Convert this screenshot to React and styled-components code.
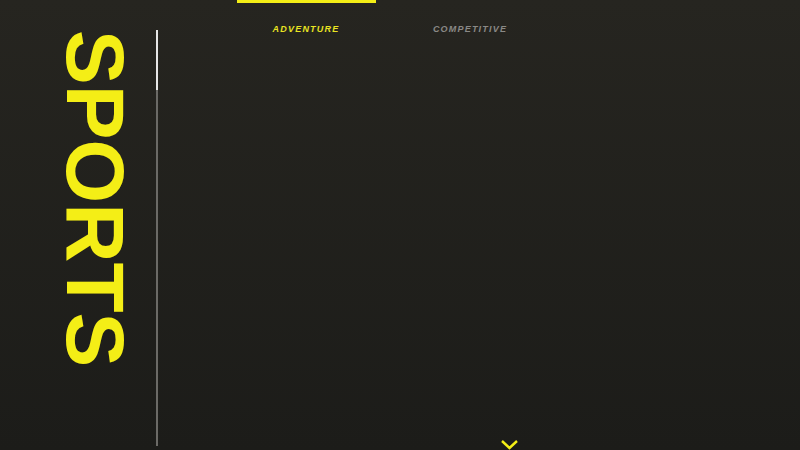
import React from 'react'
import styled, { createGlobalStyle } from 'styled-components'

const GlobalStyle = createGlobalStyle`
  html, body {
    margin: 0;
    padding: 0;
    height: 100%;
    overflow: hidden;
  }
  body {
    font-family: 'Liberation Sans', Arial, sans-serif;
    background: #1d1c19;
  }
`

const Page = styled.div`
  width: 800px;
  height: 450px;
  display: flex;
  background: linear-gradient(180deg, #262520 0%, #1c1c19 100%);
  overflow: hidden;
`

const Side = styled.aside`
  width: 156px;
  display: flex;
  justify-content: flex-end;
  padding-top: 30px;
  box-sizing: border-box;
`

const Title = styled.h1`
  margin: 0 20px 0 0;
  writing-mode: vertical-rl;
  font-size: 82px;
  line-height: 1;
  font-weight: 700;
  color: #f4ee16;
  height: fit-content;
`

const Rule = styled.div`
  width: 2px;
  margin-top: 30px;
  height: 416px;
  background: linear-gradient(180deg, #e6e6e6 0, #e6e6e6 60px, #6b6a66 60px, #6b6a66 100%);
`

const Main = styled.main`
  flex: 1;
  display: flex;
  flex-direction: column;
  align-items: center;
`

const Tabs = styled.nav`
  display: flex;
  gap: 25px;
  margin-left: -182px;
`

const Tab = styled.div`
  width: 139px;
  display: flex;
  flex-direction: column;
  align-items: center;
  gap: 21px;
  font-size: 9px;
  font-weight: 700;
  font-style: italic;
  letter-spacing: 1.2px;
  color: ${p => (p.active ? '#e9e422' : '#8a8986')};
  &::before {
    content: '';
    width: 100%;
    height: 3px;
    background: ${p => (p.active ? '#f4ee16' : 'transparent')};
  }
`

const Down = styled.div`
  margin-top: auto;
  margin-left: 60px;
  height: 10px;
  display: flex;
  align-items: flex-start;
`

export default function App() {
  return (
    <Page>
      <GlobalStyle />
      <Side>
        <Title>SPORTS</Title>
      </Side>
      <Rule />
      <Main>
        <Tabs>
          <Tab active>ADVENTURE</Tab>
          <Tab>COMPETITIVE</Tab>
        </Tabs>
        <Down>
          <svg width="17" height="10" viewBox="0 0 17 10">
            <polyline points="1,1 8.5,8 16,1" fill="none" stroke="#f4ee16" strokeWidth="2.4" />
          </svg>
        </Down>
      </Main>
    </Page>
  )
}
